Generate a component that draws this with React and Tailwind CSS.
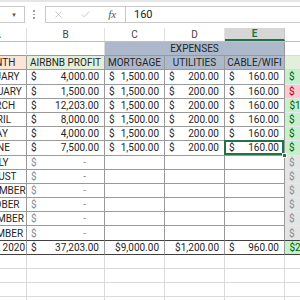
import React from 'react';
import { X, Check } from 'lucide-react';

const months = ['JANUARY', 'FEBRUARY', 'MARCH', 'APRIL', 'MAY', 'JUNE', 'JULY', 'AUGUST', 'SEPTEMBER', 'OCTOBER', 'NOVEMBER', 'DECEMBER'];
const profit = [4000, 1500, 12203, 8000, 4000, 7500, null, null, null, null, null, null];
const expenses = [1500, 200, 160];

const fmt = (n) => Math.abs(n).toLocaleString('en-US', { minimumFractionDigits: 2, maximumFractionDigits: 2 });

const Money = ({ v, tight, dim }) => {
  if (v === null || v === undefined) {
    return (
      <div className={`flex w-full justify-between pl-[4px] pr-[18px] ${dim || 'text-[#8a8a8a]'}`}>
        <span>$</span>
        <span>-</span>
      </div>
    );
  }
  const txt = v < 0 ? `(${fmt(v)})` : fmt(v);
  if (tight) {
    return <div className="w-full pr-[5px] text-right">${txt}</div>;
  }
  return (
    <div className={`flex w-full justify-between pl-[4px] ${v < 0 ? 'pr-[2px]' : 'pr-[5px]'}`}>
      <span>$</span>
      <span>{txt}</span>
    </div>
  );
};

const Cell = ({ w, className = '', children }) => (
  <div className={`relative flex h-full shrink-0 items-center border-r border-b pt-px ${w} ${className}`}>{children}</div>
);

const grid = 'border-[#dadada]';
const line = 'border-[#9a9a9a]';

const A = 'w-[58px]';
const B = 'w-[78px]';
const C = 'w-[60px]';
const F = 'w-[60px]';

const Row = ({ children }) => <div className="flex h-[14.2px]">{children}</div>;

const netCell = (n) => {
  if (n === null) return 'bg-[#e4e4e4] text-[#8a8a8a]';
  if (n < 0) return 'bg-[#ffc7ce] text-[#9c0006]';
  return 'bg-[#c6efce] text-[#006100]';
};

export default function App() {
  return (
    <div className="h-[300px] w-[300px] overflow-hidden bg-white font-['Roboto',sans-serif] text-[10px] leading-none text-[#262626]">
      {/* formula bar */}
      <div className="flex h-[28px] items-start border-t-2 border-[#e6e6e6] pt-[4px]">
        <div className="flex h-[17px] w-[25px] items-center justify-end border border-l-0 border-[#c8c8c8] pr-[7px] text-[6px] text-[#555]">▼</div>
        <div className="ml-[1px] flex h-[17px] w-[16px] flex-col items-center justify-center gap-[2px]">
          <span className="h-[1.5px] w-[1.5px] bg-[#9a9a9a]" />
          <span className="h-[1.5px] w-[1.5px] bg-[#9a9a9a]" />
          <span className="h-[1.5px] w-[1.5px] bg-[#9a9a9a]" />
        </div>
        <div className="ml-[3px] flex h-[17px] flex-1 border border-r-0 border-[#c8c8c8]">
          <div className="flex w-[80px] shrink-0 items-center border-r border-[#c8c8c8]">
            <div className="flex w-[26px] justify-center text-[#a8a8a8]"><X size={11} strokeWidth={1.3} /></div>
            <div className="flex w-[28px] justify-center text-[#a8a8a8]"><Check size={11} strokeWidth={1.3} /></div>
            <div className="flex w-[26px] justify-center font-['Liberation_Serif',serif] text-[11px] italic text-[#555]">fx</div>
          </div>
          <div className="flex items-center pl-[8px] text-[11px] text-[#222]">160</div>
        </div>
      </div>

      <div className="-ml-[31px]">
        {/* column headers */}
        <div className="flex h-[14px] border-b border-[#c0c0c0] text-[10px] text-[#444]">
          <div className={`shrink-0 border-r border-[#e1e1e1] ${A} flex items-center justify-center`}>A</div>
          <div className={`shrink-0 border-r border-[#e1e1e1] ${B} flex items-center justify-center`}>B</div>
          <div className={`shrink-0 border-r border-[#e1e1e1] ${C} flex items-center justify-center`}>C</div>
          <div className={`shrink-0 border-r border-[#e1e1e1] ${C} flex items-center justify-center`}>D</div>
          <div className={`shrink-0 border-r border-b-2 border-r-[#c8c8c8] border-b-[#217346] bg-[#d6d6d6] ${C} flex items-center justify-center font-bold text-[#217346]`}>E</div>
          <div className={`shrink-0 border-r border-[#e1e1e1] ${F} flex items-center justify-center`}>F</div>
        </div>

        {/* row 1 */}
        <Row>
          <Cell w={A} className={`${grid} border-b-[#9a9a9a]`} />
          <Cell w={B} className={`${grid} border-b-[#9a9a9a]`} />
          <Cell w="w-[180px]" className={`${line} justify-center bg-[#adb9ca]`}>EXPENSES</Cell>
          <Cell w={F} className={grid} />
        </Row>

        {/* row 2 */}
        <Row>
          <Cell w={A} className={`${line} justify-center bg-[#fce4d6]`}>MONTH</Cell>
          <Cell w={B} className={`${line} justify-center bg-[#e2efda]`}>AIRBNB PROFIT</Cell>
          <Cell w={C} className={`${line} justify-center bg-[#adb9ca]`}>MORTGAGE</Cell>
          <Cell w={C} className={`${line} justify-center bg-[#adb9ca]`}>UTILITIES</Cell>
          <Cell w={C} className={`${line} justify-center bg-[#adb9ca]`}>CABLE/WIFI</Cell>
          <Cell w={F} className={`${grid} bg-[#e2efda]`} />
        </Row>

        {months.map((m, i) => {
          const p = profit[i];
          const net = p === null ? null : p - 1860;
          const last = i === months.length - 1;
          const bb = last ? 'border-b-[#404040]' : '';
          return (
            <Row key={m}>
              <Cell w={A} className={`${line} ${bb} justify-center`}>{m}</Cell>
              <Cell w={B} className={`${line} ${bb}`}><Money v={p} /></Cell>
              {expenses.map((e, j) => (
                <Cell key={j} w={C} className={`${line} ${bb}`}>
                  {p !== null && <Money v={e} />}
                  {i === 5 && j === 2 && (
                    <>
                      <div className="pointer-events-none absolute -left-px -top-px z-10 h-[calc(100%+1px)] w-[calc(100%+1px)] border-2 border-[#217346]" />
                      <div className="absolute -bottom-[3px] -right-[3px] z-20 h-[5px] w-[5px] border border-white bg-[#217346]" />
                    </>
                  )}
                </Cell>
              ))}
              <Cell w={F} className={`border-[#e8e8e8] ${bb} ${netCell(net)}`}>
                <Money v={net} tight={net !== null && Math.abs(net) >= 10000} dim={net === null ? 'text-[#8a8a8a]' : ''} />
              </Cell>
            </Row>
          );
        })}

        {/* total row */}
        <Row>
          <Cell w={A} className={`${line} border-b-[#404040] justify-center`}>TOTAL 2020</Cell>
          <Cell w={B} className={`${line} border-b-[#404040]`}><Money v={37203} /></Cell>
          <Cell w={C} className={`${line} border-b-[#404040]`}><Money v={9000} tight /></Cell>
          <Cell w={C} className={`${line} border-b-[#404040]`}><Money v={1200} tight /></Cell>
          <Cell w={C} className={`${line} border-b-[#404040]`}><Money v={960} /></Cell>
          <Cell w={F} className={`border-[#e8e8e8] border-b-[#404040] bg-[#c6efce] text-[#006100]`}><Money v={26043} tight /></Cell>
        </Row>

        {[0, 1, 2, 3].map((r) => (
          <Row key={r}>
            <Cell w={A} className={grid} />
            <Cell w={B} className={grid} />
            <Cell w={C} className={grid} />
            <Cell w={C} className={grid} />
            <Cell w={C} className={grid} />
            <Cell w={F} className={grid} />
          </Row>
        ))}
      </div>
    </div>
  );
}
